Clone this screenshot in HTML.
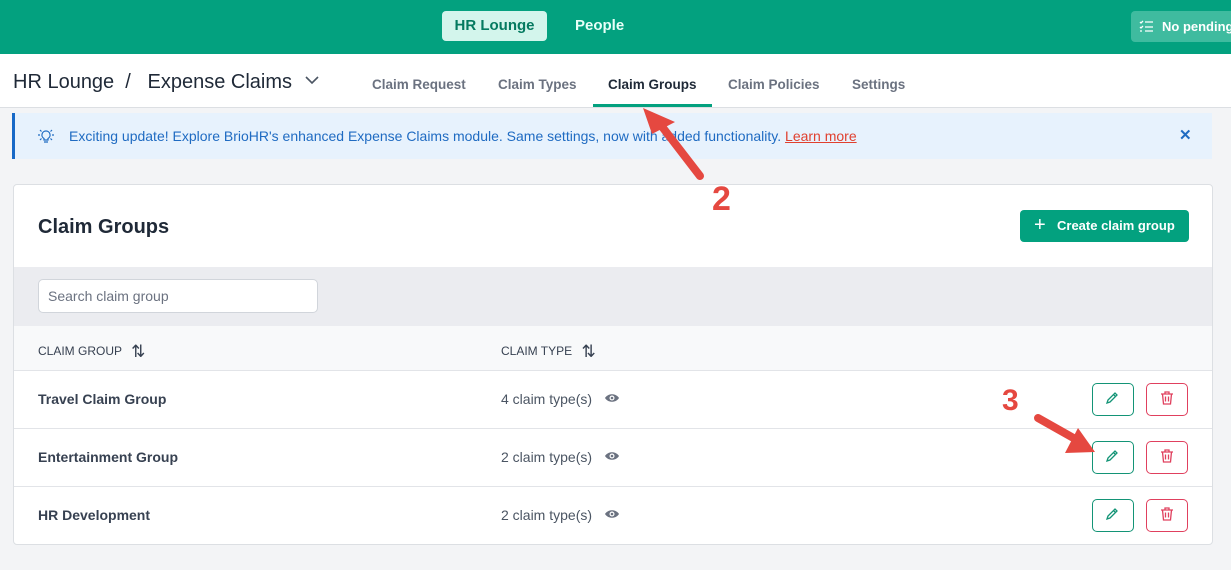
<!DOCTYPE html>
<html><head><meta charset="utf-8"><style>
*{box-sizing:border-box;margin:0;padding:0}
body{width:1231px;height:570px;overflow:hidden;background:#f3f4f6;font-family:"Liberation Sans",sans-serif;position:relative;color:#374151}
.top{position:absolute;left:0;top:0;width:1231px;height:54px;background:#03a17f}
.hrl{position:absolute;left:442px;top:11px;width:105px;height:30px;background:#d3f5ec;border-radius:4px;color:#047a60;font-size:15px;font-weight:bold;text-align:center;line-height:30px}
.ppl{position:absolute;left:575px;top:11px;line-height:30px;color:#e8fff8;font-size:15px;font-weight:bold}
.np{position:absolute;left:1131px;top:11px;width:110px;height:31px;background:#3fbb9f;border-radius:4px;color:#fff;font-size:13px;font-weight:bold;line-height:31px;padding-left:31px}
.sub{position:absolute;left:0;top:54px;width:1231px;height:54px;background:#fff;border-bottom:1px solid #dcdfe3}
.bc{position:absolute;left:13px;top:70px;font-size:20px;color:#1f2937;line-height:24px}
.tab{position:absolute;top:77px;font-size:13.5px;color:#6b7280;font-weight:bold;line-height:16px}
.banner{position:absolute;left:12px;top:113px;width:1200px;height:46px;background:#e7f2fd;border-left:3px solid #1769c7;color:#1f6bc2;font-size:14px;line-height:46px;padding-left:54px}
.card{position:absolute;left:13px;top:184px;width:1200px;height:361px;background:#fff;border:1px solid #dcdfe3;border-radius:4px;overflow:hidden}
.ct{position:absolute;left:24px;top:31px;font-size:20px;color:#1f2937;font-weight:bold}
.btn{position:absolute;left:1006px;top:25px;width:169px;height:32px;background:#03a17f;border-radius:4px;color:#fff;font-size:13px;font-weight:bold;line-height:32px;padding-left:37px}
.band{position:absolute;left:0;top:82px;width:1200px;height:59px;background:#ebecf0}
.srch{position:absolute;left:24px;top:12px;width:280px;height:34px;background:#fff;border:1px solid #d1d5db;border-radius:5px;font-size:14px;color:#6b7280;line-height:32px;padding-left:9px}
.th{position:absolute;left:0;top:141px;width:1200px;height:45px;background:#f8f9fa;border-bottom:1px solid #e2e4e8}
.h{position:absolute;top:18px;font-size:12px;color:#374151;line-height:14px}
.row{position:absolute;left:0;width:1200px;height:58px;border-bottom:1px solid #e2e4e8}
.gn{position:absolute;left:24px;top:20px;font-size:14px;font-weight:bold;color:#374151}
.ty{position:absolute;left:487px;top:20px;font-size:14px;color:#4b5563}
.ed{position:absolute;left:1078px;top:12px;width:42px;height:33px;border:1px solid #139476;border-radius:5px}
.dl{position:absolute;left:1132px;top:12px;width:42px;height:33px;border:1px solid #e0405e;border-radius:5px}
</style></head><body>
<div class="top"></div>
<div class="hrl">HR Lounge</div>
<div class="ppl">People</div>
<div class="np"><svg style="position:absolute;left:8px;top:9px" width="14" height="13" viewBox="0 0 14 13" fill="none" stroke="#fff" stroke-width="1.3"><path d="M1 2l1 1 2-2M1 7l1 1 2-2M1 11h2M6 2h8M6 7h8M6 11h8"/></svg>No pending</div>
<div class="sub"></div>
<div class="bc">HR Lounge &nbsp;/ &nbsp; Expense Claims</div>
<svg style="position:absolute;left:304px;top:75px" width="16" height="10" viewBox="0 0 16 10" fill="none" stroke="#4b5563" stroke-width="1.6"><path d="M2 2l6 6 6-6"/></svg>
<div class="tab" style="left:372px">Claim Request</div>
<div class="tab" style="left:498px">Claim Types</div>
<div class="tab" style="left:608px;color:#1f2937">Claim Groups</div>
<div style="position:absolute;left:593px;top:104px;width:119px;height:3px;background:#03a17f"></div>
<div class="tab" style="left:728px">Claim Policies</div>
<div class="tab" style="left:852px">Settings</div>
<div class="banner">Exciting update! Explore BrioHR's enhanced Expense Claims module. Same settings, now with added functionality. <span style="color:#e0402f;text-decoration:underline">Learn more</span>
<svg style="position:absolute;left:22px;top:14px" width="18" height="18" viewBox="0 0 18 18" fill="none" stroke="#1f6bc2" stroke-width="1.2"><path d="M9 4a4 4 0 0 0-2 7.5V13h4v-1.5A4 4 0 0 0 9 4zM7 15h4M1 8h2M15 8h2M3 3l1.5 1.5M15 3l-1.5 1.5M3 13l1.5-1.5M15 13l-1.5-1.5"/></svg>
<span style="position:absolute;left:1164px;top:0;font-weight:bold;font-size:15px">✕</span></div>
<div class="card">
<div class="ct">Claim Groups</div>
<div class="btn"><span style="position:absolute;left:14px;top:-1px;font-size:20px;font-weight:normal">+</span>Create claim group</div>
<div class="band"><div class="srch">Search claim group</div></div>
<div class="th"><div class="h" style="left:24px">CLAIM GROUP <span style="font-size:17px;margin-left:6px;vertical-align:-2px">⇅</span></div><div class="h" style="left:487px">CLAIM TYPE <span style="font-size:17px;margin-left:6px;vertical-align:-2px">⇅</span></div></div>
<div class="row" style="top:186px"><div class="gn">Travel Claim Group</div><div class="ty">4 claim type(s)</div><div class="ed"></div><div class="dl"></div></div>
<div class="row" style="top:244px"><div class="gn">Entertainment Group</div><div class="ty">2 claim type(s)</div><div class="ed"></div><div class="dl"></div></div>
<div class="row" style="top:302px;border:none"><div class="gn">HR Development</div><div class="ty">2 claim type(s)</div><div class="ed"></div><div class="dl"></div></div>
</div>
<svg style="position:absolute;left:0;top:0" width="1231" height="570">
<defs><g id="eye"><path d="M0 5c3-5 11-5 14 0-3 5-11 5-14 0z" fill="#6b7280"/><circle cx="7" cy="5" r="2.5" fill="#fff"/><circle cx="7" cy="5" r="1.3" fill="#6b7280"/></g>
<g id="pen" fill="none" stroke="#139476" stroke-width="1.3"><path d="M2 12l1-3 7-7 2 2-7 7zM8.5 3.5l2 2"/></g>
<g id="bin" fill="none" stroke="#e0405e" stroke-width="1.3"><path d="M1 3h12M5 3V1h4v2M2.5 3l1 10h7l1-10M5.5 5.5v5M8.5 5.5v5"/></g></defs>
<use href="#eye" x="605" y="393"/><use href="#eye" x="605" y="451"/><use href="#eye" x="605" y="509"/>
<use href="#pen" x="1105" y="391"/><use href="#pen" x="1105" y="449"/><use href="#pen" x="1105" y="507"/>
<use href="#bin" x="1160" y="391"/><use href="#bin" x="1160" y="449"/><use href="#bin" x="1160" y="507"/>
<path d="M700 176L660 124" stroke="#e54840" stroke-width="8" stroke-linecap="round"/>
<path d="M643 108L675 122L652 134Z" fill="#e54840"/>
<text x="712" y="210" font-family="Liberation Sans" font-weight="bold" font-size="34" fill="#e54840">2</text>
<path d="M1038 418L1077 440" stroke="#e54840" stroke-width="8" stroke-linecap="round"/>
<path d="M1095 452L1065 453L1078 428Z" fill="#e54840"/>
<text x="1002" y="410" font-family="Liberation Sans" font-weight="bold" font-size="30" fill="#e54840">3</text>
</svg>
</body></html>
